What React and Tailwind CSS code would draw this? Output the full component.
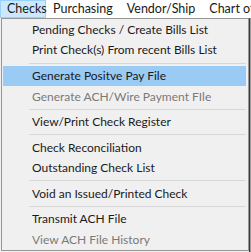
const items = [
  { label: "Pending Checks / Create Bills List" },
  { label: "Print Check(s) From recent Bills List" },
  { sep: true },
  { label: "Generate Positve Pay File", active: true },
  { label: "Generate ACH/Wire Payment FIle", disabled: true },
  { sep: true },
  { label: "View/Print Check Register" },
  { sep: true },
  { label: "Check Reconciliation" },
  { label: "Outstanding Check List" },
  { sep: true },
  { label: "Void an Issued/Printed Check" },
  { sep: true },
  { label: "Transmit ACH File" },
  { label: "View ACH File History", disabled: true },
];

const topMenus = [
  { label: "Checks", open: true },
  { label: "Purchasing" },
  { label: "Vendor/Ship" },
  { label: "Chart of Accounts" },
];

export default function App() {
  return (
    <div
      className="w-[251px] h-[252px] overflow-hidden bg-[#f0f0f0] text-[12px] text-[#1a1a1a] flex flex-col"
      style={{ fontFamily: 'Lato, "Segoe UI", sans-serif' }}
    >
      {/* menu bar */}
      <div className="h-[18px] bg-white flex items-stretch whitespace-nowrap shrink-0 overflow-hidden text-[12.5px]">
        {topMenus.map((m) => (
          <div
            key={m.label}
            className={
              m.open
                ? "pl-[6px] w-[46px] shrink-0 flex items-center bg-[#cce8ff] border border-[#99d1ff]"
                : "px-[7px] shrink-0 flex items-center"
            }
          >
            {m.label}
          </div>
        ))}
      </div>

      <div className="flex flex-1 min-h-0">
        {/* dropdown */}
        <div className="ml-[1px] w-[248px] h-[233px] border border-[#979797] bg-[#f0f0f0] pt-[0.7px] px-[1px] flex flex-col">
          {items.map((it, i) =>
            it.sep ? (
              <div key={i} className="h-[5px] flex items-center pl-[26px] pr-[1px]">
                <div className="h-px w-full bg-[#d7d7d7]" />
              </div>
            ) : (
              <div
                key={i}
                className={
                  "h-[20.6px] flex items-center pl-[29px] whitespace-nowrap " +
                  (it.active ? "bg-[#99cbf5] mr-[1px] " : "") +
                  (it.disabled ? "text-[#7a7a7a]" : "")
                }
              >
                {it.label}
              </div>
            )
          )}
        </div>
        <div className="w-[2px] border-l border-[#3c3c3c] bg-[#9a9a9a]" />
      </div>
    </div>
  );
}
